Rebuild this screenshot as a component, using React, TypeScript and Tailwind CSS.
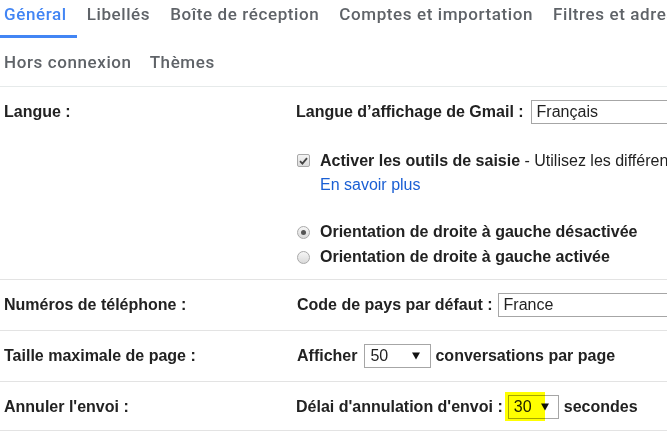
import React from 'react';

const TABS_TOP = ['Libellés', 'Boîte de réception', 'Comptes et importation', 'Filtres et adresses bloquées'];
const TABS_BOTTOM = ['Hors connexion', 'Thèmes'];

function Arrow() {
  return (
    <svg width="8" height="8" viewBox="0 0 8 8" className="shrink-0">
      <polygon points="0,0.5 8,0.5 4,7.5" fill="#111" />
    </svg>
  );
}

function Checkbox() {
  return (
    <span className="ml-px mr-[10px] flex h-[13px] w-[13px] shrink-0 items-center justify-center rounded-[2px] border border-[#a9a9a9] bg-gradient-to-b from-[#f4f4f4] to-[#dcdcdc]">
      <svg width="9" height="8" viewBox="0 0 9 8">
        <path d="M1 4.2 L3.4 6.6 L8 1.2" fill="none" stroke="#444" strokeWidth="1.8" />
      </svg>
    </span>
  );
}

function Radio({ checked }: { checked?: boolean }) {
  return (
    <span className="ml-px mr-[10px] flex h-[13px] w-[13px] shrink-0 items-center justify-center rounded-full border border-[#a9a9a9] bg-gradient-to-b from-[#f6f6f6] to-[#dadada]">
      {checked && <span className="h-[5px] w-[5px] rounded-full bg-[#555]" />}
    </span>
  );
}

function Row({ label, children, last }: { label: string; children: React.ReactNode; last?: boolean }) {
  return (
    <div className={`grid grid-cols-[296px_1fr] border-b border-[#e3e3e3] pt-[13px] ${last ? 'pb-[11px]' : 'pb-[13px]'}`}>
      <div className="pl-1 font-bold leading-6">{label}</div>
      <div className="flex h-6 items-center whitespace-nowrap">{children}</div>
    </div>
  );
}

export default function App() {
  return (
    <div className="h-[440px] w-[667px] overflow-hidden bg-white text-[16px] text-[#222] [font-family:'Liberation_Sans',Arial,sans-serif]">
      {/* Onglets */}
      <div className="border-b border-[#e6eaea] [font-family:Roboto,'Open_Sans',sans-serif] text-[17px] font-medium tracking-[0.6px] text-[#5f6368]">
        <div className="flex h-[38px] whitespace-nowrap">
          <div className="border-b-[3px] border-[#4285f4] pl-1 pr-[10px] pt-1 leading-5 text-[#4285f4]">Général</div>
          {TABS_TOP.map((tab) => (
            <div key={tab} className="ml-[10px] mr-[10px] pt-1 leading-5">
              {tab}
            </div>
          ))}
        </div>
        <div className="flex gap-[18px] whitespace-nowrap py-[14px] pl-1 leading-5">
          {TABS_BOTTOM.map((tab) => (
            <div key={tab}>{tab}</div>
          ))}
        </div>
      </div>

      {/* Langue */}
      <div className="grid grid-cols-[296px_1fr] border-b border-[#e3e3e3] pb-[10px] pt-[13px]">
        <div className="pl-1 font-bold leading-6">Langue :</div>
        <div className="flex flex-col whitespace-nowrap">
          <div className="flex h-6 items-center">
            <span className="font-bold">Langue d’affichage de Gmail :</span>
            <div className="ml-[7px] flex h-6 w-[300px] shrink-0 items-center border border-[#a6a6a6] pl-[5px]">Français</div>
          </div>
          <div className="mt-6 flex h-6 items-center pt-px">
            <Checkbox />
            <span className="font-bold">Activer les outils de saisie</span>
            <span>&nbsp;- Utilisez les différents outils de saisie pour écrire dans la langue de votre choix.</span>
          </div>
          <div className="h-6 pl-[24px] pt-px leading-6 text-[#1a5fd4]">En savoir plus</div>
          <div className="mt-6 flex h-6 items-center">
            <Radio checked />
            <span className="font-bold">Orientation de droite à gauche désactivée</span>
          </div>
          <div className="mt-px flex h-6 items-center">
            <Radio />
            <span className="font-bold">Orientation de droite à gauche activée</span>
          </div>
        </div>
      </div>

      <Row label="Numéros de téléphone :">
        <span className="ml-px font-bold">Code de pays par défaut :</span>
        <div className="ml-[5px] flex h-6 w-[300px] shrink-0 items-center border border-[#a6a6a6] pl-[5px]">France</div>
      </Row>

      <Row label="Taille maximale de page :">
        <span className="ml-px font-bold">Afficher</span>
        <div className="ml-[7px] flex h-6 w-[67px] shrink-0 items-center justify-between border border-[#a6a6a6] pl-[5px] pr-[10px]">
          <span>50</span>
          <Arrow />
        </div>
        <span className="ml-[4px] font-bold">conversations par page</span>
      </Row>

      <Row label="Annuler l'envoi :" last>
        <span className="font-bold">Délai d'annulation d'envoi :</span>
        <div className="relative ml-[5px] flex h-6 w-[51px] shrink-0 items-center justify-between border border-[#a6a6a6] pl-[5px] pr-[9px]">
          <span>30</span>
          <Arrow />
          <span className="pointer-events-none absolute -left-1 -top-1 h-[29px] w-10 bg-[#ffff00] mix-blend-multiply" />
        </div>
        <span className="ml-[5px] font-bold">secondes</span>
      </Row>
    </div>
  );
}
